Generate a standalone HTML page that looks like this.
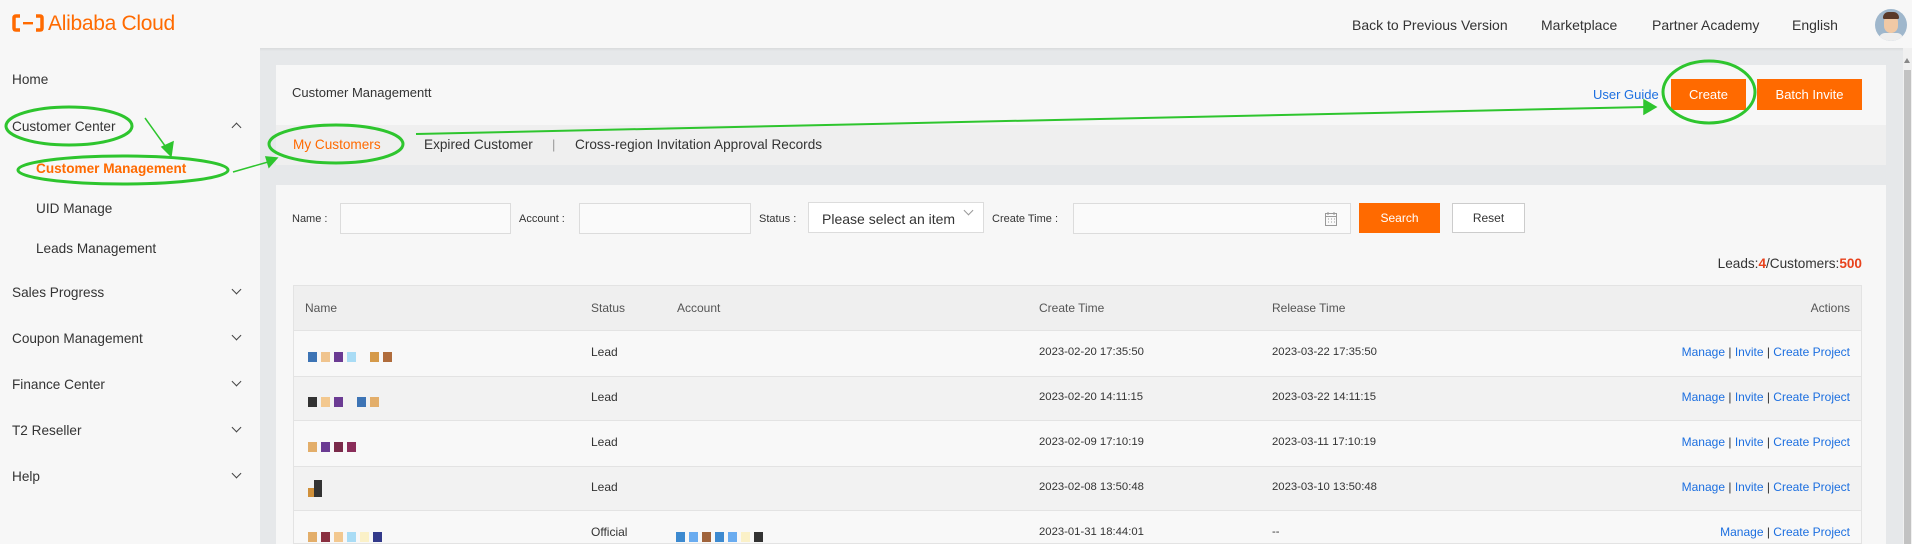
<!DOCTYPE html>
<html><head><meta charset="utf-8"><style>
*{box-sizing:border-box;margin:0;padding:0}
body{width:1912px;height:544px;overflow:hidden;background:#e6e8ea;font-family:"Liberation Sans",Arial,sans-serif;color:#333;position:relative;font-size:13px}
.a{position:absolute;white-space:nowrap}
.hdr{left:0;top:0;width:1912px;height:48px;background:#f7f7f7;box-shadow:0 1px 3px rgba(0,0,0,.08)}
.side{left:0;top:48px;width:260px;height:496px;background:#f7f7f7}
.side-t{font-size:13.6px}
.card{background:#f7f7f7}
.inp{border:1px solid #dcdcdc;background:#fafafa;height:31px}
.blue{color:#1c6fe0}
.sq{display:inline-block;width:9px;height:10px;margin-right:4px;vertical-align:middle}
.chev{width:7px;height:7px;border-right:1.2px solid #444;border-bottom:1.2px solid #444;transform:rotate(45deg)}
.dt{font-size:11.3px}
</style></head><body>
<div class="a hdr"></div>
<svg class="a" style="left:12px;top:14px" width="32" height="18" viewBox="0 0 32 18"><path d="M8 2H4Q2 2 2 4V14Q2 16 4 16H8M24 2H28Q30 2 30 4V14Q30 16 28 16H24" fill="none" stroke="#ff6a00" stroke-width="3.5"/><rect x="11" y="8" width="10" height="2.4" fill="#ff6a00"/></svg>
<div class="a" style="left:48px;top:12px;font-size:21px;color:#ff6a00;letter-spacing:-.3px">Alibaba Cloud</div>
<div class="a" style="left:1352px;top:17px;font-size:14px">Back to Previous Version</div>
<div class="a" style="left:1541px;top:17px;font-size:14px">Marketplace</div>
<div class="a" style="left:1652px;top:17px;font-size:14px">Partner Academy</div>
<div class="a" style="left:1792px;top:17px;font-size:14px">English</div>
<div class="a" style="left:1875px;top:9px;width:32px;height:32px;border-radius:50%;background:#9fb7cc;overflow:hidden"><div class="a" style="left:9px;top:6px;width:14px;height:18px;border-radius:7px;background:#f1c9a5"></div><div class="a" style="left:8px;top:3px;width:16px;height:7px;border-radius:8px 8px 2px 2px;background:#5a3a2a"></div><div class="a" style="left:4px;top:24px;width:24px;height:12px;border-radius:10px;background:#eee"></div></div>

<div class="a side"></div>
<div class="a side-t" style="left:12px;top:72px">Home</div>
<div class="a side-t" style="left:12px;top:119px">Customer Center</div>
<div class="a chev" style="left:233px;top:124px;transform:rotate(225deg)"></div>
<div class="a side-t" style="left:36px;top:161px;color:#ff6a00;font-weight:bold">Customer Management</div>
<div class="a side-t" style="left:36px;top:201px">UID Manage</div>
<div class="a side-t" style="left:36px;top:241px">Leads Management</div>
<div class="a side-t" style="left:12px;top:285px">Sales Progress</div><div class="a chev" style="left:233px;top:286px"></div>
<div class="a side-t" style="left:12px;top:331px">Coupon Management</div><div class="a chev" style="left:233px;top:332px"></div>
<div class="a side-t" style="left:12px;top:377px">Finance Center</div><div class="a chev" style="left:233px;top:378px"></div>
<div class="a side-t" style="left:12px;top:423px">T2 Reseller</div><div class="a chev" style="left:233px;top:424px"></div>
<div class="a side-t" style="left:12px;top:469px">Help</div><div class="a chev" style="left:233px;top:470px"></div>

<div class="a card" style="left:276px;top:65px;width:1610px;height:100px"></div>
<div class="a" style="left:276px;top:125px;width:1610px;height:40px;background:#efefef"></div>
<div class="a" style="left:292px;top:85px">Customer Managementt</div>
<div class="a blue" style="left:1593px;top:87px">User Guide</div>
<div class="a" style="left:1671px;top:79px;width:75px;height:31px;background:#ff6a00;color:#fff;text-align:center;line-height:31px">Create</div>
<div class="a" style="left:1757px;top:79px;width:105px;height:31px;background:#ff6a00;color:#fff;text-align:center;line-height:31px">Batch Invite</div>
<div class="a" style="left:293px;top:137px;color:#ff6a00;font-size:13.6px">My Customers</div>
<div class="a" style="left:424px;top:137px;font-size:13.6px">Expired Customer</div>
<div class="a" style="left:552px;top:137px;color:#999">|</div>
<div class="a" style="left:575px;top:137px;font-size:13.6px">Cross-region Invitation Approval Records</div>

<div class="a card" style="left:276px;top:185px;width:1610px;height:359px"></div>
<div class="a" style="left:292px;top:213px;font-size:11px">Name :</div>
<div class="a inp" style="left:340px;top:203px;width:171px"></div>
<div class="a" style="left:519px;top:213px;font-size:11px">Account :</div>
<div class="a inp" style="left:579px;top:203px;width:172px"></div>
<div class="a" style="left:759px;top:213px;font-size:11px">Status :</div>
<div class="a inp" style="left:808px;top:202px;width:176px;background:#fff;padding:8px 13px;font-size:14px">Please select an item</div>
<div class="a" style="left:965px;top:207px;width:7px;height:7px;border-right:1px solid #999;border-bottom:1px solid #999;transform:rotate(45deg)"></div>
<div class="a" style="left:992px;top:213px;font-size:11px">Create Time :</div>
<div class="a inp" style="left:1073px;top:203px;width:278px"></div>
<svg class="a" style="left:1325px;top:211px" width="12" height="15" viewBox="0 0 12 15"><rect x=".5" y="2.5" width="11" height="12" fill="none" stroke="#999"/><path d="M.5 5.5h11M3 1v3M9 1v3M3 8h1M6 8h1M9 8h1M3 11h1M6 11h1M9 11h1" stroke="#999"/></svg>
<div class="a" style="left:1359px;top:203px;width:81px;height:30px;background:#ff6a00;color:#fff;text-align:center;line-height:30px;font-size:12px">Search</div>
<div class="a" style="left:1452px;top:203px;width:73px;height:30px;border:1px solid #ccc;background:#fff;text-align:center;line-height:28px;font-size:12px">Reset</div>
<div class="a" style="left:1650px;top:256px;width:212px;text-align:right;font-size:13.6px">Leads:<b style="color:#e8421c">4</b>/Customers:<b style="color:#e8421c">500</b></div>

<div class="a" style="left:293px;top:285px;width:1569px;height:259px;border:1px solid #e3e3e3;background:#f8f8f8"></div>
<div class="a" style="left:294px;top:286px;width:1567px;height:45px;background:#efefef;border-bottom:1px solid #e3e3e3"></div>
<div class="a" style="left:305px;top:301px;font-size:12px;color:#555">Name</div>
<div class="a" style="left:591px;top:301px;font-size:12px;color:#555">Status</div>
<div class="a" style="left:677px;top:301px;font-size:12px;color:#555">Account</div>
<div class="a" style="left:1039px;top:301px;font-size:12px;color:#555">Create Time</div>
<div class="a" style="left:1272px;top:301px;font-size:12px;color:#555">Release Time</div>
<div class="a" style="left:1790px;top:301px;width:60px;text-align:right;font-size:12px;color:#555">Actions</div>

<div class="a" style="left:294px;top:376px;width:1567px;height:45px;background:#f2f2f2;border-top:1px solid #e3e3e3;border-bottom:1px solid #e3e3e3"></div>
<div class="a" style="left:294px;top:466px;width:1567px;height:45px;background:#f2f2f2;border-top:1px solid #e3e3e3;border-bottom:1px solid #e3e3e3"></div>

<div class="a" style="left:308px;top:348px"><span class="sq" style="background:#3d74b5"></span><span class="sq" style="background:#f0c48e"></span><span class="sq" style="background:#6b3b93"></span><span class="sq" style="background:#a9dcf5;margin-right:14px"></span><span class="sq" style="background:#d59a4a"></span><span class="sq" style="background:#b06c3c"></span></div>
<div class="a" style="left:308px;top:393px"><span class="sq" style="background:#333"></span><span class="sq" style="background:#f3c88f"></span><span class="sq" style="background:#6b3b93;margin-right:14px"></span><span class="sq" style="background:#3d74b5"></span><span class="sq" style="background:#e3ae6a"></span></div>
<div class="a" style="left:308px;top:438px"><span class="sq" style="background:#e3ae6a"></span><span class="sq" style="background:#6b3b93"></span><span class="sq" style="background:#7a2a4a"></span><span class="sq" style="background:#8a2d5a"></span></div>
<div class="a" style="left:308px;top:480px;width:16px;height:17px"><div class="a" style="left:6px;top:0;width:8px;height:17px;background:#333"></div><div class="a" style="left:0;top:8px;width:6px;height:9px;background:#d0903a"></div></div>
<div class="a" style="left:308px;top:528px"><span class="sq" style="background:#e3ae6a"></span><span class="sq" style="background:#8a3040"></span><span class="sq" style="background:#f3c88f"></span><span class="sq" style="background:#a9dcf5"></span><span class="sq" style="background:#fbf1c8"></span><span class="sq" style="background:#333a8a"></span></div>
<div class="a" style="left:676px;top:528px"><span class="sq" style="background:#3d8ad0"></span><span class="sq" style="background:#6aacf0"></span><span class="sq" style="background:#a0643c"></span><span class="sq" style="background:#3d8ad0"></span><span class="sq" style="background:#6aacf0"></span><span class="sq" style="background:#fbf1c8"></span><span class="sq" style="background:#333"></span></div>

<div class="a" style="left:591px;top:345px;font-size:12px">Lead</div>
<div class="a" style="left:591px;top:390px;font-size:12px">Lead</div>
<div class="a" style="left:591px;top:435px;font-size:12px">Lead</div>
<div class="a" style="left:591px;top:480px;font-size:12px">Lead</div>
<div class="a" style="left:591px;top:525px;font-size:12px">Official</div>
<div class="a dt" style="left:1039px;top:346px">2023-02-20 17:35:50</div>
<div class="a dt" style="left:1039px;top:391px">2023-02-20 14:11:15</div>
<div class="a dt" style="left:1039px;top:436px">2023-02-09 17:10:19</div>
<div class="a dt" style="left:1039px;top:481px">2023-02-08 13:50:48</div>
<div class="a dt" style="left:1039px;top:526px">2023-01-31 18:44:01</div>
<div class="a dt" style="left:1272px;top:346px">2023-03-22 17:35:50</div>
<div class="a dt" style="left:1272px;top:391px">2023-03-22 14:11:15</div>
<div class="a dt" style="left:1272px;top:436px">2023-03-11 17:10:19</div>
<div class="a dt" style="left:1272px;top:481px">2023-03-10 13:50:48</div>
<div class="a dt" style="left:1272px;top:526px">--</div>
<div class="a" style="left:1590px;top:345px;width:260px;text-align:right;font-size:12px"><span class="blue">Manage</span> | <span class="blue">Invite</span> | <span class="blue">Create Project</span></div>
<div class="a" style="left:1590px;top:390px;width:260px;text-align:right;font-size:12px"><span class="blue">Manage</span> | <span class="blue">Invite</span> | <span class="blue">Create Project</span></div>
<div class="a" style="left:1590px;top:435px;width:260px;text-align:right;font-size:12px"><span class="blue">Manage</span> | <span class="blue">Invite</span> | <span class="blue">Create Project</span></div>
<div class="a" style="left:1590px;top:480px;width:260px;text-align:right;font-size:12px"><span class="blue">Manage</span> | <span class="blue">Invite</span> | <span class="blue">Create Project</span></div>
<div class="a" style="left:1590px;top:525px;width:260px;text-align:right;font-size:12px"><span class="blue">Manage</span> | <span class="blue">Create Project</span></div>

<div class="a" style="left:1903px;top:48px;width:9px;height:496px;background:#f0f0f0"></div>
<div class="a" style="left:1904px;top:70px;width:7px;height:474px;background:#c2c2c2"></div>
<div class="a" style="left:1904px;top:58px;width:0;height:0;border-left:3.5px solid transparent;border-right:3.5px solid transparent;border-bottom:5px solid #888"></div>

<svg class="a" style="left:0;top:0" width="1912" height="544">
<g fill="none" stroke="#2ec52e" stroke-width="3">
<ellipse cx="69" cy="126" rx="63" ry="19"/>
<ellipse cx="123" cy="170" rx="105" ry="14"/>
<ellipse cx="336" cy="144" rx="67" ry="19"/>
<ellipse cx="1709" cy="92" rx="46" ry="31"/>
</g>
<g stroke="#2ec52e" stroke-width="1.5" fill="#2ec52e">
<line x1="145" y1="118" x2="168" y2="150"/><polygon points="171,156 162,147 173,142"/>
<line x1="233" y1="172" x2="268" y2="162"/><polygon points="277,158 266,157 269,167"/>
<line x1="416" y1="134" x2="1646" y2="107" stroke-width="2"/><polygon points="1656,107 1644,100 1644,114"/>
</g>
</svg>
</body></html>
